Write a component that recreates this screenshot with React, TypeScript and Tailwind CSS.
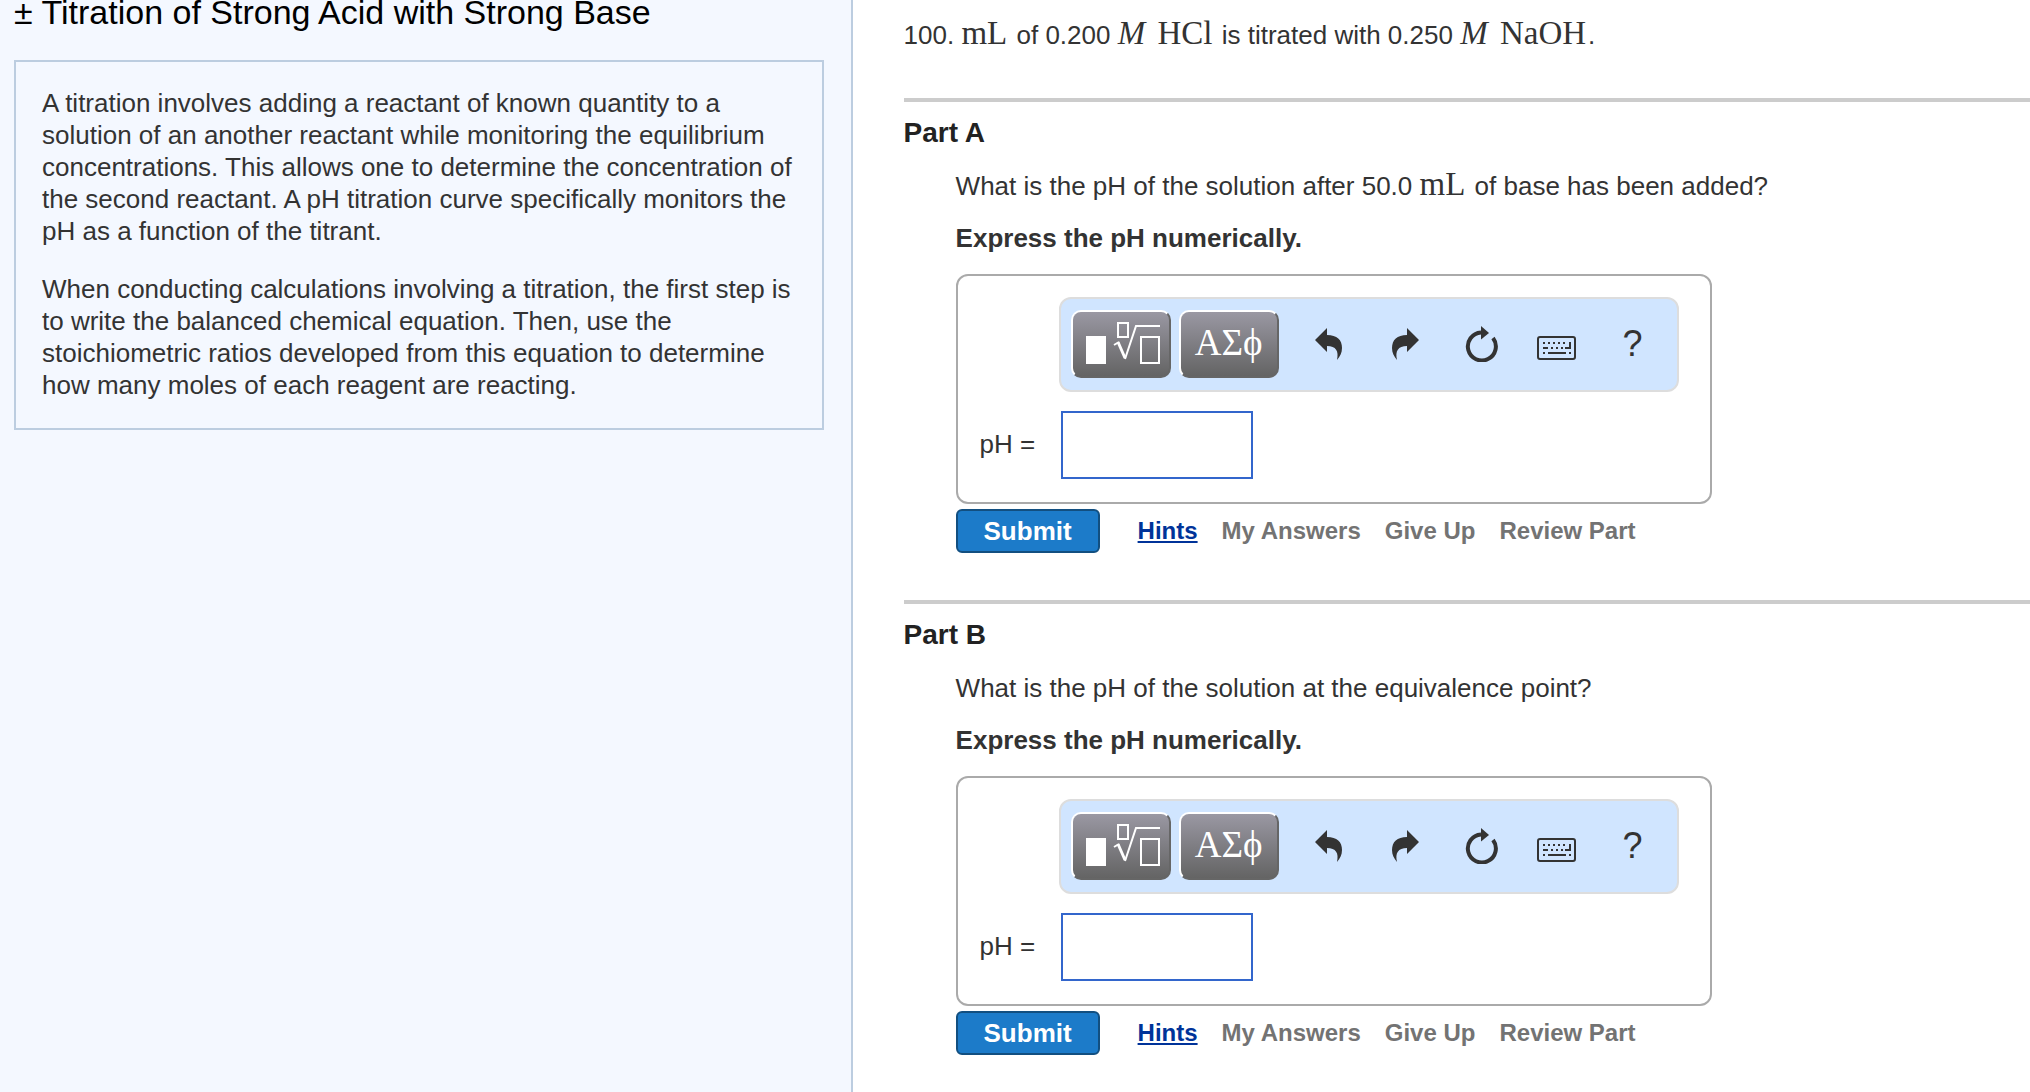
import { useState } from "react";
import type { ReactNode } from "react";

const Tex = ({ children }: { children: ReactNode }) => (
  <span className="mr-[2px] font-['Liberation_Serif',serif] text-[33px] leading-[0]">
    {children}
  </span>
);

const TemplateIcon = () => (
  <svg width="80" height="44" viewBox="-5 1 80 44" fill="none" stroke="#fff" strokeWidth="2">
    <rect x="0" y="15" width="20" height="28" fill="#fff" stroke="none" />
    <rect x="32" y="2" width="10" height="14" />
    <path d="M28 24l5-3" />
    <path d="M32 21l7 16" strokeWidth="3" />
    <path d="M39 38L50 5h24" />
    <rect x="55" y="16" width="18" height="26" />
  </svg>
);

const UndoIcon = () => (
  <svg width="28" height="32" viewBox="0 0 28 32" fill="#333">
    <path d="M12 0v7c10 0 15 5 15 13 0 5-2 8-5 12 2-9-1-14-10-14v6L0 12z" />
  </svg>
);

const RedoIcon = () => (
  <svg width="28" height="32" viewBox="0 0 28 32" fill="#333">
    <path d="M16 0v7C6 7 1 12 1 20c0 5 2 8 5 12-2-9 1-14 10-14v6l12-12z" />
  </svg>
);

const ResetIcon = () => (
  <svg width="34" height="36" viewBox="0 0 34 36" fill="none">
    <path d="M17 6.500A14 14 0 1 0 29 12" stroke="#333" strokeWidth="4" />
    <path d="M17 0v13.500L25 7z" fill="#333" />
  </svg>
);

const KeyboardIcon = () => (
  <svg width="40" height="24" viewBox="0 0 40 24" fill="none" stroke="#333" strokeWidth="2">
    <rect x="1" y="1" width="37" height="22" rx="2" />
    <path d="M6 7h24" strokeDasharray="2 3" />
    <path d="M6 12h5M14 12h2M19 12h2M24 12h2M28 12h6M33 6v7" />
    <path d="M6 17h2M11 17h18M32 17h2" />
  </svg>
);

const keyClass =
  "flex h-[68px] w-[100px] items-center justify-center rounded-[10px] border-2 border-t-white border-l-white border-r-[#666] border-b-[#666] bg-linear-to-b from-[#9a98a3] to-[#646464] text-white";
const toolClass = "flex h-[68px] w-[76px] items-center justify-center";

const Toolbar = () => (
  <div className="ml-[79px] flex h-[95px] w-[620px] items-start rounded-xl border-2 border-[#ddd] bg-[#d0e5ff] pt-[11px] pl-[10px]">
    <button className={keyClass} aria-label="Templates">
      <TemplateIcon />
    </button>
    <button
      className={`${keyClass} mx-2 pb-1 font-['Liberation_Serif',serif] text-[37px] leading-none`}
    >
      ΑΣϕ
    </button>
    <button className={`${toolClass} ml-1`} aria-label="Undo">
      <UndoIcon />
    </button>
    <button className={toolClass} aria-label="Redo">
      <RedoIcon />
    </button>
    <button className={toolClass} aria-label="Reset">
      <ResetIcon />
    </button>
    <button className={`${toolClass} pt-2`} aria-label="Keyboard shortcuts">
      <KeyboardIcon />
    </button>
    <button className={`${toolClass} text-[36px] leading-none text-[#333]`}>?</button>
  </div>
);

const links = ["My Answers", "Give Up", "Review Part"];

const Part = ({ id, children }: { id: string; children: ReactNode }) => {
  const [value, setValue] = useState("");

  return (
    <section className="border-t-4 border-[#ccc] pt-[11px] pb-[47px] last:pb-0">
      <h2 className="text-[28px] leading-10 font-bold text-[#222]">Part {id}</h2>
      <div className="pl-[52px]">
        <p className="mt-[17px] leading-8">{children}</p>
        <p className="mt-5 leading-8 font-bold">Express the pH numerically.</p>

        <div className="mt-5 h-[230px] w-[756px] rounded-xl border-2 border-[#aaa] pt-[21px] pl-[22px]">
          <Toolbar />
          <div className="mt-[19px] flex items-center">
            <label htmlFor={`ph-${id}`} className="w-[81px] pb-[2px]">
              pH =
            </label>
            <input
              id={`ph-${id}`}
              value={value}
              onChange={(e) => setValue(e.target.value)}
              className="h-[68px] w-[192px] border-2 border-[#36c] bg-white px-3 outline-none"
            />
          </div>
        </div>

        <div className="mt-[5px] flex items-center gap-6 text-2xl font-bold">
          <button className="mr-[14px] h-11 w-36 rounded-md border-2 border-[#124f80] bg-[#1c7bc9] text-[26px] leading-none text-white">
            Submit
          </button>
          <a href="#hints" className="text-[#039] underline">
            Hints
          </a>
          {links.map((link) => (
            <a key={link} href="#" className="text-[#737373]">
              {link}
            </a>
          ))}
        </div>
      </div>
    </section>
  );
};

const App = () => {
  return (
    <div className="flex min-h-screen bg-white font-['Liberation_Sans',Arial,sans-serif] text-[26px] text-[#333]">
      <aside className="w-[42%] shrink-0 border-r-2 border-[#bccde0] bg-[#f4f8ff] pr-[27px] pl-[14px]">
        <h1 className="mb-7 h-8 text-[34px] leading-6 text-black">
          ± Titration of Strong Acid with Strong Base
        </h1>
        <div className="space-y-[26px] border-2 border-[#bccde0] px-[26px] pt-[25px] pb-[27px] leading-8">
          <p>
            A titration involves adding a reactant of known quantity to a
            solution of an another reactant while monitoring the equilibrium
            concentrations. This allows one to determine the concentration of
            the second reactant. A pH titration curve specifically monitors the
            pH as a function of the titrant.
          </p>
          <p>
            When conducting calculations involving a titration, the first step
            is to write the balanced chemical equation. Then, use the
            stoichiometric ratios developed from this equation to determine how
            many moles of each reagent are reacting.
          </p>
        </div>
      </aside>

      <main className="grow pl-[51px]">
        <p className="h-[98px] pt-[19px] leading-8">
          100. <Tex>mL</Tex> of 0.200{" "}
          <Tex>
            <i className="mr-1">M</i> HCl
          </Tex>{" "}
          is titrated with 0.250{" "}
          <Tex>
            <i className="mr-1">M</i> NaOH
          </Tex>
          .
        </p>
        <Part id="A">
          What is the pH of the solution after 50.0 <Tex>mL</Tex> of base has
          been added?
        </Part>
        <Part id="B">
          What is the pH of the solution at the equivalence point?
        </Part>
      </main>
    </div>
  );
};

export default App;
